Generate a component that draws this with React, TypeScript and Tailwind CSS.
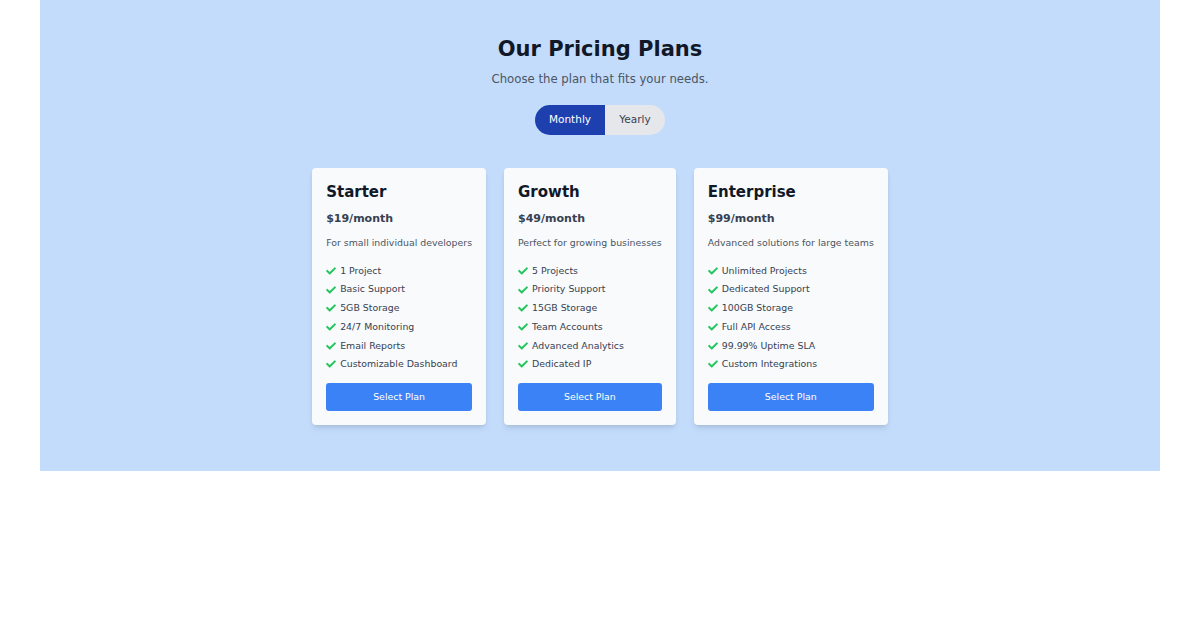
import { FaCheck } from 'react-icons/fa'

const plans = [
  {
    name: 'Starter',
    price: '$19/month',
    blurb: 'For small individual developers',
    features: ['1 Project', 'Basic Support', '5GB Storage', '24/7 Monitoring', 'Email Reports', 'Customizable Dashboard'],
  },
  {
    name: 'Growth',
    price: '$49/month',
    blurb: 'Perfect for growing businesses',
    features: ['5 Projects', 'Priority Support', '15GB Storage', 'Team Accounts', 'Advanced Analytics', 'Dedicated IP'],
  },
  {
    name: 'Enterprise',
    price: '$99/month',
    blurb: 'Advanced solutions for large teams',
    features: ['Unlimited Projects', 'Dedicated Support', '100GB Storage', 'Full API Access', '99.99% Uptime SLA', 'Custom Integrations'],
  },
]

export default function App() {
  return (
    <div className="w-[1200px] h-[630px] bg-white font-['DejaVu_Sans',sans-serif]">
      <section className="mx-[40px] h-[471px] bg-[#c3dcfc] pt-[35px] flex flex-col items-center">
        <h1 className="text-[21px] leading-[28px] font-bold text-[#111827]">Our Pricing Plans</h1>
        <p className="mt-[8px] text-[11.7px] leading-[16px] text-[#4b5563]">Choose the plan that fits your needs.</p>

        {/* Toggle */}
        <div className="mt-[18px] flex h-[30px] rounded-full overflow-hidden text-[10.5px]">
          <button className="w-[70px] bg-[#1e40af] text-white">Monthly</button>
          <button className="w-[60px] bg-[#e5e7eb] text-[#374151]">Yearly</button>
        </div>

        <div className="mt-[33px] flex gap-[18px] items-start">
          {plans.map((p) => (
            <div key={p.name} className="bg-[#f8fafc] rounded-[4px] shadow-md px-[14px] pt-[14px] pb-[14px]">
              <h2 className="text-[15px] leading-[20px] font-bold text-[#111827]">{p.name}</h2>
              <div className="mt-[10px] text-[11px] leading-[14px] font-bold text-[#374151]">{p.price}</div>
              <p className="mt-[10px] text-[9.4px] leading-[14px] text-[#4b5563]">{p.blurb}</p>
              <ul className="mt-[14px] flex flex-col gap-[5px]">
                {p.features.map((f) => (
                  <li key={f} className="flex items-center gap-[4px] h-[13.7px] text-[9.4px] text-[#374151]">
                    <FaCheck className="w-[10px] h-[10px] text-[#22c55e]" />
                    {f}
                  </li>
                ))}
              </ul>
              <button className="mt-[12px] w-full h-[28px] rounded-[3px] bg-[#3b82f6] text-white text-[9.4px]">Select Plan</button>
            </div>
          ))}
        </div>
      </section>
    </div>
  )
}
